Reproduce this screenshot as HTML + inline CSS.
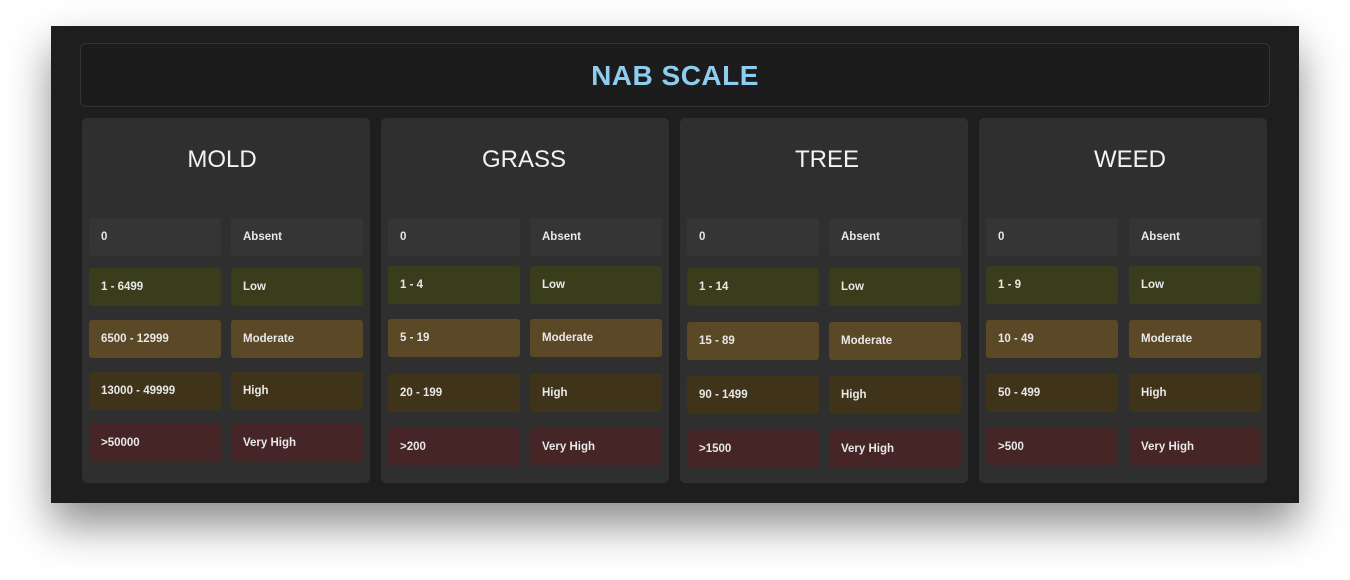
<!DOCTYPE html>
<html><head><style>
body{margin:0;width:1350px;height:580px;background:#fff;position:relative;overflow:hidden;font-family:"Liberation Sans",sans-serif}
.win{position:absolute;left:51px;top:26px;width:1248px;height:477px;background:#1e1e1e;box-shadow:0 22px 40px rgba(0,0,0,.45)}
.hdr{position:absolute;left:80px;top:43px;width:1188px;height:62px;background:#1c1c1c;border:1px solid #333;border-radius:6px;color:#8ecdf0;font-weight:bold;font-size:28px;text-align:center;line-height:64px;letter-spacing:.5px}
.card{position:absolute;top:118px;width:288px;height:365px;background:#2f2f2f;border-radius:5px}
.t{position:absolute;top:146px;width:200px;text-align:center;color:#f2f2f2;font-size:24px}
.c{position:absolute;width:132px;height:38px;line-height:38px;border-radius:3px;color:#e8e8e8;font-size:11.5px;font-weight:bold;box-sizing:border-box;padding-left:12px}
.a{background:#353535}.l{background:#3a3d1c}.m{background:#5a4826}.h{background:#3f331a}.v{background:#452526}
</style></head><body>
<div class="win"></div>
<div class="hdr">NAB SCALE</div>
<div id="root"></div>
<script>
const cards=[
 {x:82,tc:222,t:"MOLD",lx:89,rx:231,ys:[218,268,320,372,424],v:["0","1 - 6499","6500 - 12999","13000 - 49999",">50000"]},
 {x:381,tc:524,t:"GRASS",lx:388,rx:530,ys:[218,266,319,374,428],v:["0","1 - 4","5 - 19","20 - 199",">200"]},
 {x:680,tc:827,t:"TREE",lx:687,rx:829,ys:[218,268,322,376,430],v:["0","1 - 14","15 - 89","90 - 1499",">1500"]},
 {x:979,tc:1130,t:"WEED",lx:986,rx:1129,ys:[218,266,320,374,428],v:["0","1 - 9","10 - 49","50 - 499",">500"]}];
const lab=["Absent","Low","Moderate","High","Very High"],cls=["a","l","m","h","v"];
let h="";
for(const c of cards){
 h+=`<div class="card" style="left:${c.x}px"></div><div class="t" style="left:${c.tc-100}px">${c.t}</div>`;
 c.ys.forEach((y,i)=>{
  h+=`<div class="c ${cls[i]}" style="left:${c.lx}px;top:${y}px">${c.v[i]}</div>`;
  h+=`<div class="c ${cls[i]}" style="left:${c.rx}px;top:${y}px">${lab[i]}</div>`;
 });
}
document.getElementById("root").innerHTML=h;
</script>
</body></html>
